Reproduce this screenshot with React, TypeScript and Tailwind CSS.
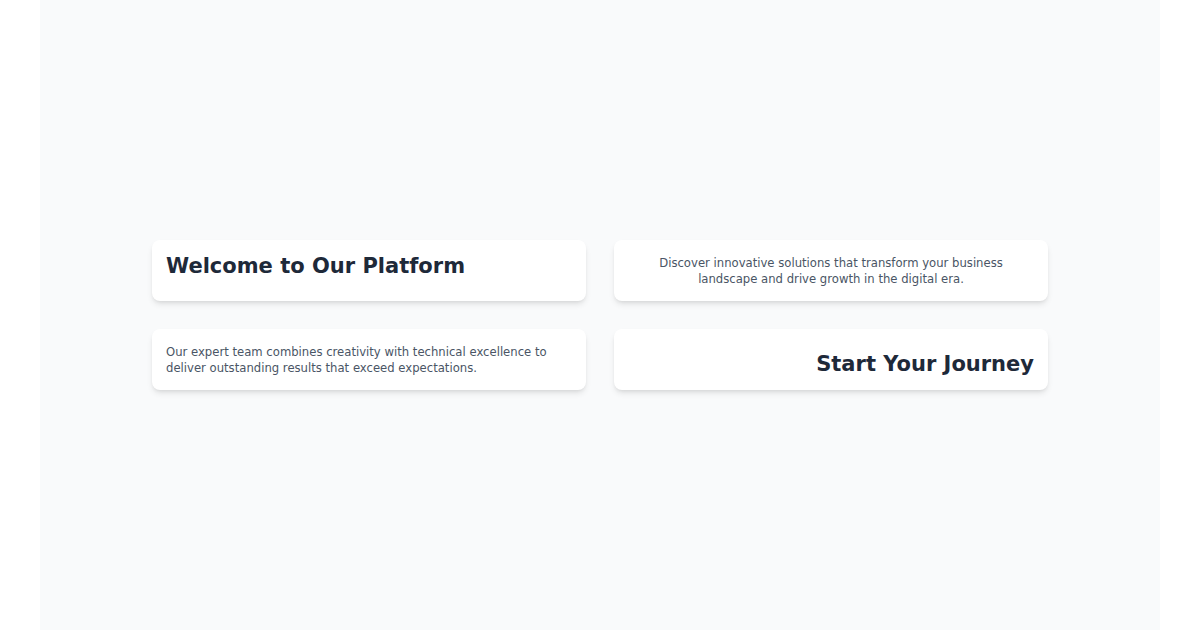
export default function App() {
    return (
        <div className="min-h-screen bg-white px-10" style={{ fontFamily: '"DejaVu Sans", sans-serif' }}>
            <div className="min-h-screen bg-gray-50 flex items-center justify-center">
                <div className="w-full max-w-4xl grid grid-cols-2 gap-7">
                    {/* Row 1 */}
                    <div className="bg-white rounded-lg shadow-md px-3.5 pt-3.5 pb-[15px] flex items-start">
                        <h2 className="text-[21px] font-bold text-gray-800 leading-6">Welcome to Our Platform</h2>
                    </div>
                    <div className="bg-white rounded-lg shadow-md px-3.5 pt-[15px] pb-3.5 flex items-center justify-center">
                        <p className="text-[11.65px] leading-4 text-gray-600 text-center">
                            Discover innovative solutions that transform your business landscape and drive growth in the digital era.
                        </p>
                    </div>

                    {/* Row 2 */}
                    <div className="bg-white rounded-lg shadow-md px-3.5 pt-[15px] pb-3.5 flex items-center">
                        <p className="text-[11.65px] leading-4 text-gray-600">
                            Our expert team combines creativity with technical excellence to deliver outstanding results that exceed expectations.
                        </p>
                    </div>
                    <div className="bg-white rounded-lg shadow-md px-3.5 pt-3.5 pb-[14.5px] flex items-end justify-end">
                        <h2 className="text-[21px] font-bold text-gray-800 leading-6 text-right">Start Your Journey</h2>
                    </div>
                </div>
            </div>
        </div>
    );
}
